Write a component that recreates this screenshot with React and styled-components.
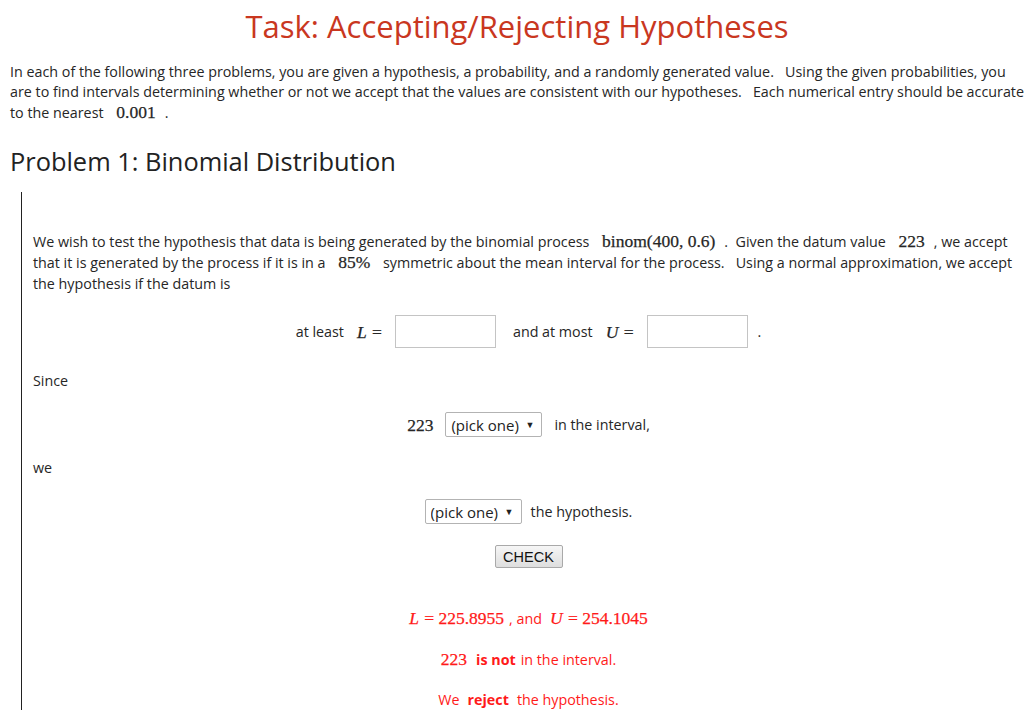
import React from 'react';
import styled, { createGlobalStyle } from 'styled-components';

const GlobalStyle = createGlobalStyle`
  html, body {
    margin: 0;
    padding: 0;
    background: #ffffff;
  }
  body {
    font-family: 'Open Sans', 'Noto Sans', sans-serif;
    color: #262626;
  }
`;

const Page = styled.div`
  padding: 0 0 0 10px;
  width: 1024px;
  box-sizing: border-box;
`;

const Title = styled.h1`
  margin: 4px 0 0;
  text-align: center;
  font-weight: 400;
  font-size: 31px;
  line-height: 44px;
  color: #c9371f;
`;

const Intro = styled.p`
  margin: 14px 0 0;
  font-size: 14.3px;
  line-height: 20px;
`;

const Heading = styled.h2`
  margin: 20px 0 0;
  font-weight: 400;
  font-size: 25.4px;
  line-height: 36px;
  color: #222;
`;

const Problem = styled.section`
  margin: 13px 0 0 11px;
  padding: 39px 0 0 11px;
  border-left: 1.5px solid #222;
  display: flex;
  flex-direction: column;
  gap: 21px;
`;

const Text = styled.p`
  margin: 0;
  font-size: 14.3px;
  line-height: ${({ $lh }) => $lh || 21}px;
`;

const Row = styled.div`
  display: flex;
  justify-content: center;
  align-items: ${({ $red }) => ($red ? 'baseline' : 'center')};
  height: ${({ $red }) => ($red ? '20px' : 'auto')};
  font-size: 14.3px;
  line-height: 20px;
  gap: ${({ $gap }) => $gap || 0}px;
  margin-top: ${({ $top }) => $top || 0}px;
  color: ${({ $red }) => ($red ? '#ff1a1a' : 'inherit')};
`;

const Math = styled.span`
  font-family: 'Liberation Serif', 'DejaVu Serif', serif;
  font-size: 17.5px;
  line-height: 20px;
  margin: 0 ${({ $space }) => ($space === undefined ? 9 : $space)}px;
  -webkit-text-stroke: 0.25px currentColor;
  white-space: nowrap;
`;

const Var = styled.i`
  font-style: italic;
  margin-right: 1px;
`;

const Field = styled.input`
  width: 101px;
  height: 33px;
  box-sizing: border-box;
  border: 1px solid #c4c4c4;
  border-radius: 0;
  padding: 4px 6px;
  font-size: 14px;
  background: #fff;
  outline: none;
`;

const Gap = styled.span`
  margin-left: ${({ $l }) => $l || 0}px;
  margin-right: ${({ $r }) => $r || 0}px;
`;

const SelectBox = styled.span`
  display: inline-flex;
  align-items: center;
  width: 97px;
  height: 25px;
  box-sizing: border-box;
  border: 1px solid #b3b3b3;
  border-radius: 2px;
  padding: 0 6px 0 5px;
  background: #fff;
  gap: 6px;
`;

const Select = styled.select`
  appearance: none;
  -webkit-appearance: none;
  border: none;
  background: transparent;
  padding: 0;
  margin: 0;
  font-family: 'Open Sans', 'Noto Sans', sans-serif;
  font-size: 15px;
  color: #222;
  outline: none;
`;

const Arrow = styled.span`
  font-size: 9px;
  color: #222;
`;

const Button = styled.button`
  width: 68px;
  height: 23px;
  box-sizing: border-box;
  border: 1px solid #a9a9a9;
  border-radius: 2px;
  background: linear-gradient(#f6f6f6, #dedede);
  font-family: 'Liberation Sans', Arial, sans-serif;
  font-size: 14.5px;
  color: #111;
  padding: 0;
`;

const Strong = styled.b`
  font-weight: 700;
`;

function PickOne() {
  return (
    <SelectBox>
      <Select defaultValue="">
        <option value="">(pick one)</option>
        <option value="a">is</option>
        <option value="b">is not</option>
      </Select>
      <Arrow>▼</Arrow>
    </SelectBox>
  );
}

export default function App() {
  return (
    <Page>
      <GlobalStyle />
      <Title>Task: Accepting/Rejecting Hypotheses</Title>
      <Intro>
        In each of the following three problems, you are given a hypothesis, a probability, and a randomly generated
        value.{'\u00a0\u00a0'} Using the given probabilities, you are to find intervals determining whether or not we
        accept that the values are consistent with our hypotheses.{'\u00a0\u00a0'} Each numerical entry should be
        accurate to the nearest <Math>0.001</Math>.
      </Intro>
      <Heading>Problem 1: Binomial Distribution</Heading>
      <Problem>
        <Text>
          We wish to test the hypothesis that data is being generated by the binomial process{' '}
          <Math>binom(400, 0.6)</Math>.{'\u00a0\u00a0'}Given the datum value <Math>223</Math>, we accept that it is
          generated by the process if it is in a <Math>85%</Math> symmetric about the mean interval for the
          process.{'\u00a0\u00a0'} Using a normal approximation, we accept the hypothesis if the datum is
        </Text>
        <Row $gap={13}>
          at least
          <Math $space={0}>
            <Var>L</Var> =
          </Math>
          <Field />
          <Gap $l={4}>and at most</Gap>
          <Math $space={0}>
            <Var>U</Var> =
          </Math>
          <Field />
          <Gap $l={-3}>.</Gap>
        </Row>
        <Text $lh={20} style={{ marginTop: 2 }}>
          Since
        </Text>
        <Row $gap={12}>
          <Math $space={0}>223</Math>
          <PickOne />
          in the interval,
        </Row>
        <Text $lh={20}>we</Text>
        <Row $gap={9}>
          <PickOne />
          the hypothesis.
        </Row>
        <Row>
          <Button>CHECK</Button>
        </Row>
        <Row $red $top={19}>
          <Math $space={0}>
            <Var>L</Var> = 225.8955
          </Math>
          <Gap $l={5} $r={8}>
            , and
          </Gap>
          <Math $space={0}>
            <Var>U</Var> = 254.1045
          </Math>
        </Row>
        <Row $red>
          <Math $space={0}>223</Math>
          <Gap $l={9} $r={5}>
            <Strong>is not</Strong>
          </Gap>
          in the interval.
        </Row>
        <Row $red>
          We
          <Gap $l={8} $r={8}>
            <Strong>reject</Strong>
          </Gap>
          the hypothesis.
        </Row>
      </Problem>
    </Page>
  );
}
